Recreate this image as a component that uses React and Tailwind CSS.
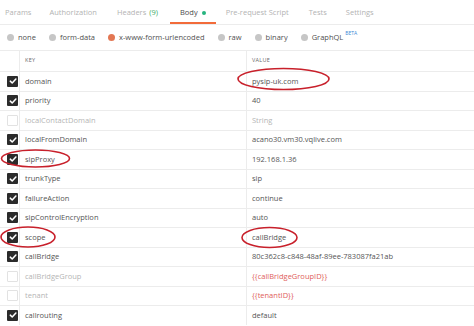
import React from "react";

const tabs = [
  { label: "Params", mr: "mr-[18px]" },
  { label: "Authorization", mr: "mr-[20px]" },
  { label: "Headers", count: "(9)", mr: "mr-[22px]" },
  { label: "Body", active: true, mr: "mr-[20px]" },
  { label: "Pre-request Script", mr: "mr-[20px]" },
  { label: "Tests", mr: "mr-[19px]" },
  { label: "Settings", mr: "" },
];

const bodyTypes = [
  { label: "none" },
  { label: "form-data" },
  { label: "x-www-form-urlencoded", selected: true },
  { label: "raw" },
  { label: "binary" },
  { label: "GraphQL", beta: true },
];

const rows = [
  { key: "domain", value: "pysip-uk.com", on: true },
  { key: "priority", value: "40", on: true },
  { key: "localContactDomain", value: "String", on: false, placeholder: true },
  { key: "localFromDomain", value: "acano30.vm30.vqlive.com", on: true },
  { key: "sipProxy", value: "192.168.1.36", on: true },
  { key: "trunkType", value: "sip", on: true },
  { key: "failureAction", value: "continue", on: true },
  { key: "sipControlEncryption", value: "auto", on: true },
  { key: "scope", value: "callBridge", on: true },
  { key: "callBridge", value: "80c362c8-c848-48af-89ee-783087fa21ab", on: true },
  { key: "callBridgeGroup", value: "{{callBridgeGroupID}}", on: false, variable: true },
  { key: "tenant", value: "{{tenantID}}", on: false, variable: true },
  { key: "callrouting", value: "default", on: true },
];

function Checkbox({ on }) {
  if (!on) {
    return <div className="w-[11px] h-[11px] rounded-[1px] border border-[#e2e2e2] bg-white" />;
  }
  return (
    <div className="w-[11px] h-[11px] rounded-[1px] bg-[#2b2b2b] flex items-center justify-center">
      <svg width="8" height="8" viewBox="0 0 10 10">
        <path d="M1.6 5.2 L4 7.5 L8.6 2.6" fill="none" stroke="#fff" strokeWidth="1.9" strokeLinecap="round" strokeLinejoin="round" />
      </svg>
    </div>
  );
}

export default function App() {
  return (
    <div
      className="relative w-[474px] h-[326px] overflow-hidden bg-white text-[7.5px] leading-none"
      style={{ fontFamily: "'Open Sans', 'Noto Sans', sans-serif" }}
    >
      {/* Request tabs */}
      <div className="h-[25px] flex items-stretch pl-[5px] border-b border-[#ececec]">
        {tabs.map((t) => (
          <div key={t.label} className={`flex items-center pt-[1px] ${t.mr}`}>
            {t.active ? (
              <div className="h-full flex items-center px-[10px] -mx-[10px] border-b-2 border-[#f26b3a] pt-[2px] text-[#4a4a4a]">
                {t.label}
                <span className="ml-[4px] w-[4px] h-[4px] rounded-full bg-[#26b47f]" />
              </div>
            ) : (
              <span className="text-[#b3b3b3]">
                {t.label}
                {t.count && <span className="ml-[3px] text-[#3fae6b]">{t.count}</span>}
              </span>
            )}
          </div>
        ))}
      </div>

      {/* Body type options */}
      <div className="h-[25px] flex items-center pl-[7px] gap-[13px] text-[#505050]">
        {bodyTypes.map((b) => (
          <div key={b.label} className="flex items-center">
            <span className={`w-[7px] h-[7px] rounded-full mr-[4px] ${b.selected ? "bg-[#e37753]" : "bg-[#c6c6c6]"}`} />
            <span>{b.label}</span>
            {b.beta && <span className="ml-[2px] -mt-[9px] text-[5px] text-[#3a8ad6]">BETA</span>}
          </div>
        ))}
      </div>

      {/* Key / value table */}
      <div className="border-t border-[#ececec]">
        <div className="flex h-[20px] text-[5.5px] tracking-[0.3px] text-[#6a6a6a]">
          <div className="w-[20px] border-r border-[#ececec]" />
          <div className="w-[227px] border-r border-[#ececec] pl-[5px] flex items-center">KEY</div>
          <div className="flex-1 pl-[5px] flex items-center">VALUE</div>
        </div>
        {rows.map((r) => (
          <div key={r.key} className="flex h-[19.5px] border-t border-[#ececec]">
            <div className="w-[20px] border-r border-[#ececec] flex items-center pl-[7px]">
              <Checkbox on={r.on} />
            </div>
            <div className={`w-[227px] border-r border-[#ececec] pl-[5px] flex items-center ${r.on ? "text-[#555555]" : "text-[#b5b5b5]"}`}>
              {r.key}
            </div>
            <div
              className={`flex-1 pl-[5px] flex items-center ${
                r.variable ? "text-[#e0605a]" : r.placeholder ? "text-[#b5b5b5]" : "text-[#555555]"
              }`}
            >
              {r.value}
            </div>
          </div>
        ))}
      </div>

      {/* Red annotation ellipses */}
      <svg className="absolute inset-0 pointer-events-none" width="474" height="326">
        <g fill="none" stroke="#c8202b" strokeWidth="1.6">
          <ellipse cx="283.5" cy="79" rx="45.5" ry="10.5" />
          <ellipse cx="35.5" cy="158.5" rx="34" ry="8.5" />
          <ellipse cx="28" cy="237" rx="27" ry="10" />
          <ellipse cx="269.5" cy="237.5" rx="27.5" ry="10" />
        </g>
      </svg>
    </div>
  );
}
